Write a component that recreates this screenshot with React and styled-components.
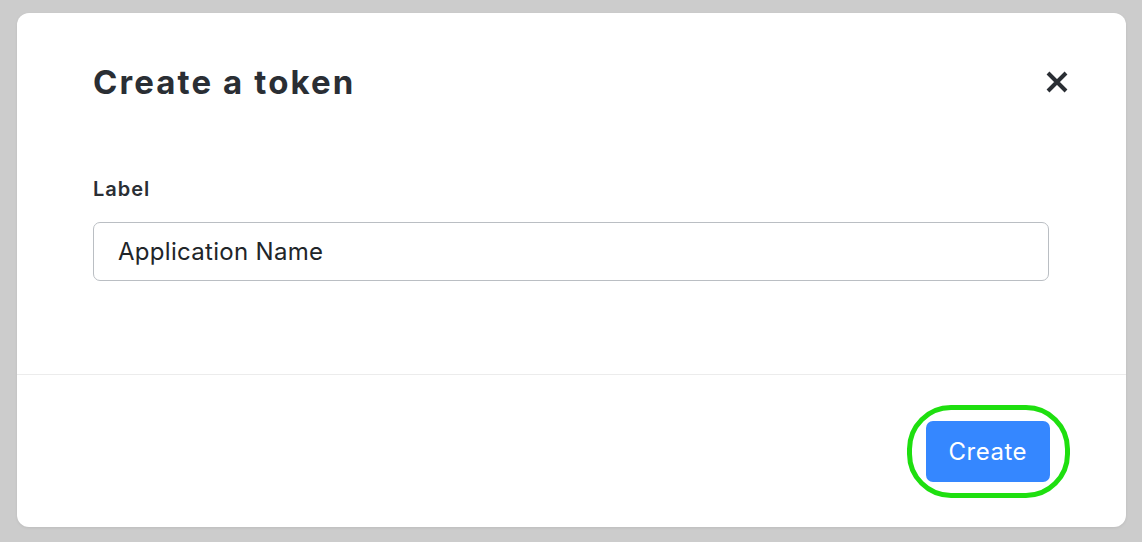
import React from "react";
import styled, { createGlobalStyle } from "styled-components";

const Global = createGlobalStyle`
  html, body { margin: 0; padding: 0; }
  body {
    background: #cccccc;
    font-family: Inter, "Noto Sans", "Liberation Sans", sans-serif;
    color: #212529;
  }
  * { box-sizing: border-box; }
`;

const Page = styled.div`
  width: 1142px;
  height: 542px;
  padding: 13px 16px 15px 17px;
  background: #cccccc;
`;

const Modal = styled.div`
  width: 100%;
  height: 100%;
  background: #ffffff;
  border-radius: 12px;
  box-shadow: 0 1px 3px rgba(0, 0, 0, 0.08);
  display: flex;
  flex-direction: column;
  overflow: hidden;
`;

const Top = styled.div`
  flex: 1;
  display: flex;
  flex-direction: column;
`;

const Header = styled.div`
  display: flex;
  align-items: center;
  justify-content: space-between;
  padding: 50px 57px 0 76px;
`;

const Title = styled.h5`
  margin: 0;
  font-size: 33px;
  line-height: 38px;
  font-weight: 700;
  color: #2a2e34;
  letter-spacing: 2.1px;
`;

const CloseButton = styled.button`
  border: 0;
  background: transparent;
  padding: 0;
  width: 24px;
  height: 24px;
  display: flex;
  align-items: center;
  justify-content: center;
  color: #212529;
  cursor: pointer;
`;

const Body = styled.div`
  padding: 76px 77px 0 76px;
  display: flex;
  flex-direction: column;
`;

const Label = styled.label`
  font-size: 20px;
  line-height: 24px;
  font-weight: 600;
  color: #2a2e34;
  letter-spacing: 1px;
  margin-bottom: 21px;
`;

const Input = styled.input`
  height: 59px;
  width: 100%;
  border: 1.5px solid #babec3;
  border-radius: 7px;
  padding: 0 24px;
  font-family: inherit;
  font-size: 24px;
  letter-spacing: 0.3px;
  color: #212529;
  background: #fff;
  outline: none;
`;

const Footer = styled.div`
  height: 153px;
  border-top: 1px solid #ececec;
  display: flex;
  align-items: center;
  justify-content: flex-end;
  padding: 0 76px 0 0;
`;

const Highlight = styled.span`
  position: relative;
  display: inline-flex;
  &::after {
    content: "";
    position: absolute;
    left: -19px;
    right: -20px;
    top: -16px;
    bottom: -16px;
    border: 5px solid #1edf0f;
    border-radius: 44px;
    pointer-events: none;
  }
`;

const PrimaryButton = styled.button`
  height: 61px;
  padding: 0 23px;
  border: 0;
  border-radius: 7px;
  background: #3587ff;
  color: #ffffff;
  font-family: inherit;
  font-size: 24px;
  letter-spacing: 0.5px;
  font-weight: 400;
  cursor: pointer;
`;

export default function App() {
  return (
    <>
      <Global />
      <Page>
        <Modal>
          <Top>
            <Header>
              <Title>Create a token</Title>
              <CloseButton aria-label="Close">
                <svg width="24" height="24" viewBox="0 0 24 24" fill="none">
                  <path
                    d="M3 3 L21 21 M21 3 L3 21"
                    stroke="#2a2e34"
                    strokeWidth="4"
                    strokeLinecap="butt"
                  />
                </svg>
              </CloseButton>
            </Header>
            <Body>
              <Label htmlFor="label">Label</Label>
              <Input id="label" defaultValue="Application Name" />
            </Body>
          </Top>
          <Footer>
            <Highlight>
              <PrimaryButton>Create</PrimaryButton>
            </Highlight>
          </Footer>
        </Modal>
      </Page>
    </>
  );
}
